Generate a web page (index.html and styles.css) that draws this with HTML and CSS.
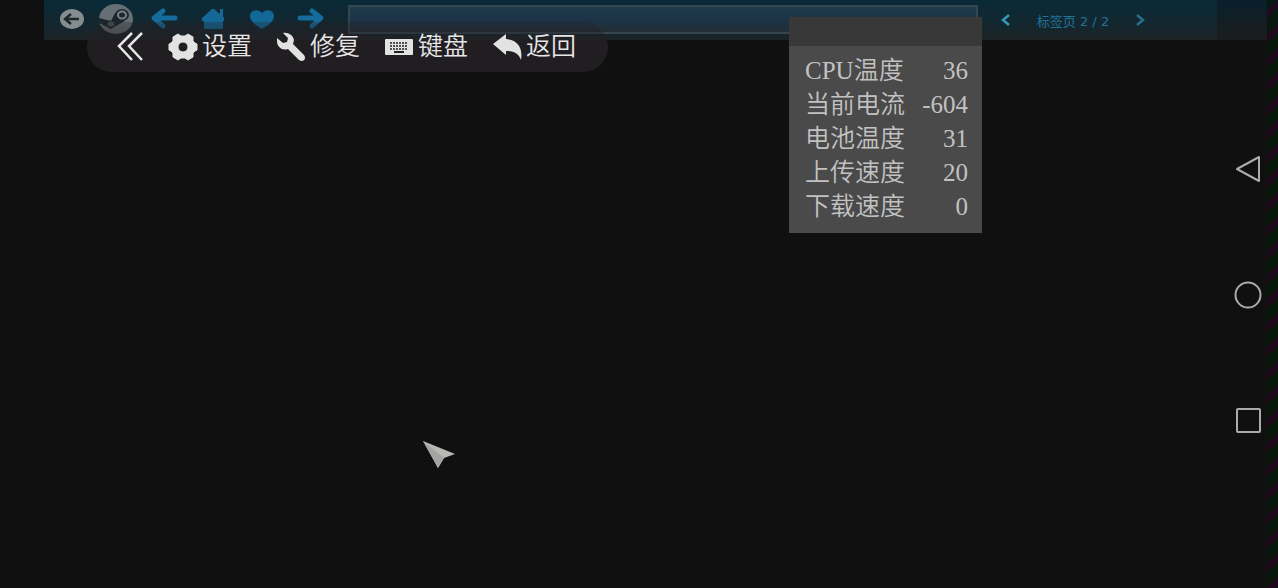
FILE: index.html
```
<!DOCTYPE html>
<html lang="zh-CN">
  <head>
    <meta charset="UTF-8" />
    <meta name="viewport" content="width=device-width, initial-scale=1.0" />
    <title>Steam</title>
    <link rel="stylesheet" href="styles.css">
  </head>
  <body>
    <header class="topbar">
      <nav class="tools">
        <button class="tool" aria-label="关闭">
          <svg width="34" height="32" viewBox="0 0 34 32">
            <ellipse cx="17" cy="16" rx="12" ry="10" fill="#858d90"/>
            <path d="M24 16H11M16 11l-6 5 6 5" fill="none" stroke="#1b272c" stroke-width="2.5"/>
          </svg>
        </button>
        <button class="tool" aria-label="Steam">
          <svg width="34" height="32" viewBox="0 0 34 32">
            <ellipse cx="17" cy="16" rx="17" ry="15" fill="#667074"/>
            <path d="M0 15l12 3 4-8 10 8-9 5-5 3-12-6z" fill="#1b272c"/>
            <ellipse cx="12" cy="21" rx="4" ry="3" fill="#4c565a" stroke="#1b272c" stroke-width="1"/>
            <ellipse cx="23" cy="12" rx="7" ry="6" fill="#1b272c"/>
            <ellipse cx="23" cy="12" rx="4" ry="3.5" fill="#1b272c" stroke="#778185" stroke-width="2"/>
          </svg>
        </button>
        <button class="tool" aria-label="后退">
          <svg width="34" height="32" viewBox="0 0 34 32">
            <path d="M27 15H7M15 8L6 15l9 8" fill="none" stroke="#146c9c" stroke-width="5" stroke-linecap="round" stroke-linejoin="round"/>
          </svg>
        </button>
        <button class="tool" aria-label="主页">
          <svg width="34" height="32" viewBox="0 0 34 32">
            <path d="M15 6h2l6 5V6h3v7l1 2v3h-1v8H7v-8H5v-3z" fill="#146896"/>
          </svg>
        </button>
        <button class="tool" aria-label="收藏">
          <svg width="34" height="32" viewBox="0 0 34 32">
            <path d="M16 26C9 22 4 18 4 13c0-6 8-8 12-3 4-5 12-3 12 3 0 5-5 9-12 13z" fill="#126998"/>
          </svg>
        </button>
        <button class="tool" aria-label="前进">
          <svg width="34" height="32" viewBox="0 0 34 32">
            <path d="M5 15h20M17 8l9 7-9 8" fill="none" stroke="#146c9c" stroke-width="5" stroke-linecap="round" stroke-linejoin="round"/>
          </svg>
        </button>
      </nav>
      <input class="address" type="text" aria-label="地址" />
      <div class="tabs">
        <button class="step" aria-label="上一页">
          <svg width="12" height="14" viewBox="0 0 12 14"><path d="M9 2L3 7l6 5" fill="none" stroke="#3596bd" stroke-width="2.5"/></svg>
        </button>
        <span class="tab-label">标签页 2 / 2</span>
        <button class="step" aria-label="下一页">
          <svg width="12" height="14" viewBox="0 0 12 14"><path d="M3 2l6 5-6 5" fill="none" stroke="#286f8c" stroke-width="2.5"/></svg>
        </button>
      </div>
      <div class="topbar-end"></div>
    </header>

    <main class="screen">
      <nav class="system-nav">
        <button aria-label="返回">
          <svg width="28" height="28" viewBox="0 0 28 28"><path d="M25 2v24L3 14z" fill="none" stroke="#acacac" stroke-width="2" stroke-linejoin="round"/></svg>
        </button>
        <button aria-label="主屏幕">
          <svg width="28" height="28" viewBox="0 0 28 28"><circle cx="14" cy="14" r="12.5" fill="none" stroke="#acacac" stroke-width="2"/></svg>
        </button>
        <button aria-label="最近任务">
          <svg width="28" height="28" viewBox="0 0 28 28"><rect x="3" y="2" width="23" height="23" rx="1" fill="none" stroke="#acacac" stroke-width="2"/></svg>
        </button>
      </nav>
    </main>

    <!-- floating menu -->
    <div class="menu">
      <button class="collapse" aria-label="收起">
        <svg width="28" height="32" viewBox="0 0 28 32"><path d="M16 2L3 15l13 14M26 2L13 15l13 14" fill="none" stroke="#e6e6e6" stroke-width="2.5"/></svg>
      </button>
      <button class="menu-item">
        <svg width="30" height="30" viewBox="0 0 30 30">
          <path fill="#e2e2e2" fill-rule="evenodd" d="M10 2l3 2h4l3-2 5 3v4l2 2 2 1v6l-2 1-2 2v4l-5 3-3-2h-4l-3 2-5-3v-4l-2-2-2-1v-6l2-1 2-2V5zM15 10a5 5 0 1 0 0 10 5 5 0 0 0 0-10z" stroke="#e2e2e2" stroke-linejoin="round"/>
        </svg>
        <span>设置</span>
      </button>
      <button class="menu-item">
        <svg width="30" height="30" viewBox="0 0 30 30">
          <path fill="#e2e2e2" d="M7 1c5-1 10 2 11 7l-1 4 11 11c3 4-1 8-5 5L12 17c-6 2-11-2-11-8V6l6 5 4-1 1-4z"/>
        </svg>
        <span>修复</span>
      </button>
      <button class="menu-item">
        <svg width="30" height="30" viewBox="0 0 30 30">
          <rect x="1" y="7" width="28" height="16" rx="1" fill="#e2e2e2"/>
          <path d="M6 11h18M6 14h18M6 17h18" stroke="#231f24" stroke-width="1.5" stroke-dasharray="2 1"/>
          <path d="M10 20h10" stroke="#231f24" stroke-width="2"/>
        </svg>
        <span>键盘</span>
      </button>
      <button class="menu-item">
        <svg width="30" height="30" viewBox="0 0 30 30">
          <path fill="#e2e2e2" d="M1 12L14 2v5c12 1 17 9 15 21-2-6-7-9-15-9v4z"/>
        </svg>
        <span>返回</span>
      </button>
    </div>

    <!-- device monitor -->
    <section class="monitor">
      <div class="monitor-head"></div>
      <table class="readings">
        <tr><th scope="row">CPU温度</th><td>36</td></tr>
        <tr><th scope="row">当前电流</th><td>-604</td></tr>
        <tr><th scope="row">电池温度</th><td>31</td></tr>
        <tr><th scope="row">上传速度</th><td>20</td></tr>
        <tr><th scope="row">下载速度</th><td>0</td></tr>
      </table>
    </section>

    <svg class="cursor" width="36" height="30" viewBox="0 0 36 30">
      <path d="M2 1l32 13-11 4-6 10z" fill="#b8b8b6"/>
      <path d="M2 1l21 17-6 10z" fill="#a4a4a2"/>
    </svg>
    <div class="edge"></div>
  </body>
</html>
```
FILE: styles.css
```
* {
  box-sizing: border-box;
}
body {
  margin: 0;
  min-height: 100vh;
  display: flex;
  flex-direction: column;
  position: relative;
  background-color: #101010;
  font-family: "Liberation Serif", "Noto Sans CJK SC", serif;
}
button {
  display: flex;
  align-items: center;
  padding: 0;
  border: none;
  background: none;
  color: inherit;
  font: inherit;
}
.topbar {
  display: flex;
  height: 40px;
  margin-left: 44px;
  padding-left: 11px;
  background-image: linear-gradient(#082a38, #13272f 60%, #1d2325);
}
.tools {
  display: flex;
  align-items: center;
  gap: 15px;
  padding-bottom: 2px;
}
.tool:nth-child(1) {
  margin-right: -5px;
}
.address {
  flex: 1;
  min-width: 0;
  height: 29px;
  margin: 5px 22px 0 19px;
  border: 2px solid #344751;
  background-image: linear-gradient(#203b4c, #1c3246 60%, #242e33);
}
.tabs {
  display: flex;
  align-items: center;
  justify-content: space-between;
  width: 146px;
}
.tab-label {
  color: #22729a;
  font: 13px "DejaVu Sans", "Noto Sans CJK SC", sans-serif;
}
.topbar-end {
  width: 61px;
  margin-left: 71px;
  background-image: linear-gradient(#09202c, #1c1c1c);
}
.screen {
  flex: 1;
  display: flex;
  justify-content: flex-end;
}
.system-nav {
  display: flex;
  flex-direction: column;
  gap: 98px;
  padding: 115px 16px 0 0;
}

.menu {
  position: absolute;
  top: 22px;
  left: 87px;
  display: flex;
  align-items: center;
  gap: 24px;
  height: 50px;
  padding: 0 32px 0 29px;
  border-radius: 25px;
  background-image: linear-gradient(rgba(35, 31, 36, 0.3), rgba(35, 31, 36, 0.5) 18px, #211e22 18px);
  color: #e6e6e6;
}
.menu-item {
  gap: 4px;
  font-size: 25px;
  line-height: 30px;
  font-weight: 350;
}

.monitor {
  position: absolute;
  top: 17px;
  left: 789px;
  width: 193px;
  padding-bottom: 9px;
  background-color: #4a4a4a;
}
.monitor-head {
  height: 29px;
  margin-bottom: 8px;
  background-color: #383838;
}
.readings {
  width: 100%;
  padding: 0 14px 0 16px;
  border-spacing: 0;
  color: #c2c2c2;
  font-size: 25px;
  line-height: 34px;
}
.readings th,
.readings td {
  height: 34px;
  padding: 0;
  white-space: nowrap;
}
.readings th {
  text-align: left;
  font-weight: 350;
}
.readings td {
  text-align: right;
}

.cursor {
  position: absolute;
  top: 440px;
  left: 421px;
}
/* faint moire along the screen edge */
.edge {
  position: absolute;
  top: 0;
  right: 0;
  bottom: 0;
  width: 11px;
  background-image: repeating-linear-gradient(135deg, rgba(4, 24, 8, 0.8) 0 6px, rgba(36, 4, 32, 0.8) 9px 12px, rgba(4, 24, 8, 0.8) 15px 17px);
}
```
